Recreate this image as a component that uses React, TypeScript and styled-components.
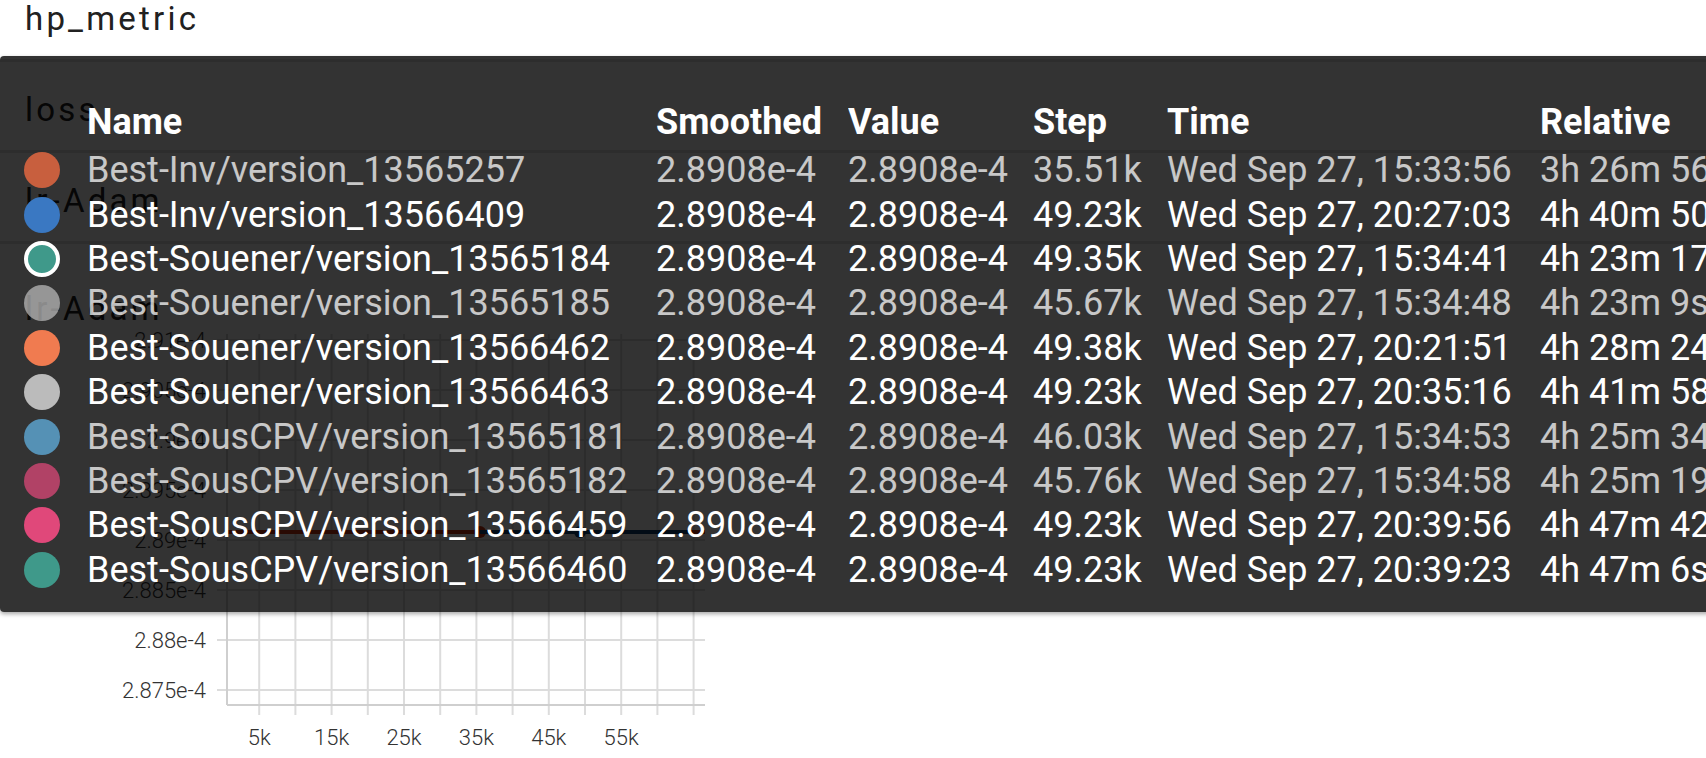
import styled, { createGlobalStyle } from "styled-components";

const GlobalStyle = createGlobalStyle`
  html, body {
    margin: 0;
    padding: 0;
    background: #ffffff;
    overflow: hidden;
  }
  body {
    font-family: Roboto, "Noto Sans", Arial, sans-serif;
  }
`;

interface Run {
  name: string;
  color: string;
  step: string;
  time: string;
  relative: string;
  dim?: boolean;
  selected?: boolean;
}

const runs: Run[] = [
  { name: "Best-Inv/version_13565257", color: "#ff7043", step: "35.51k", time: "Wed Sep 27, 15:33:56", relative: "3h 26m 56s", dim: true },
  { name: "Best-Inv/version_13566409", color: "#3a78c2", step: "49.23k", time: "Wed Sep 27, 20:27:03", relative: "4h 40m 50s" },
  { name: "Best-Souener/version_13565184", color: "#3f998a", step: "49.35k", time: "Wed Sep 27, 15:34:41", relative: "4h 23m 17s", selected: true },
  { name: "Best-Souener/version_13565185", color: "#bbbbbb", step: "45.67k", time: "Wed Sep 27, 15:34:48", relative: "4h 23m 9s", dim: true },
  { name: "Best-Souener/version_13566462", color: "#f07b50", step: "49.38k", time: "Wed Sep 27, 20:21:51", relative: "4h 28m 24s" },
  { name: "Best-Souener/version_13566463", color: "#bbbbbb", step: "49.23k", time: "Wed Sep 27, 20:35:16", relative: "4h 41m 58s" },
  { name: "Best-SousCPV/version_13565181", color: "#62b4e6", step: "46.03k", time: "Wed Sep 27, 15:34:53", relative: "4h 25m 34s", dim: true },
  { name: "Best-SousCPV/version_13565182", color: "#e0487a", step: "45.76k", time: "Wed Sep 27, 15:34:58", relative: "4h 25m 19s", dim: true },
  { name: "Best-SousCPV/version_13566459", color: "#e0487a", step: "49.23k", time: "Wed Sep 27, 20:39:56", relative: "4h 47m 42s" },
  { name: "Best-SousCPV/version_13566460", color: "#3f998a", step: "49.23k", time: "Wed Sep 27, 20:39:23", relative: "4h 47m 6s" },
];

const COLUMNS = "87px 569px 192px 185px 134px 373px 300px";

const Page = styled.div`
  position: relative;
  width: 1706px;
  height: 758px;
  overflow: hidden;
`;

// the run list is scrolled a little: the first header is partly out of view
const Scrolled = styled.div`
  margin-top: -29px;
`;

const GroupHeader = styled.div`
  height: 82px;
  padding-top: 6px;
  display: flex;
  align-items: center;
  padding-left: 25px;
  border-bottom: 3px solid #e0e0e0;
  font-size: 33px;
  letter-spacing: 3.2px;
  color: #212121;
`;

const ChartCard = styled.div`
  display: flex;
  flex-direction: column;
`;

const CardTitle = styled.div`
  padding: 45px 0 0 25px;
  font-size: 33px;
  letter-spacing: 3.2px;
  color: #212121;
`;

const Tooltip = styled.div`
  position: absolute;
  top: 56px;
  left: 0;
  width: 1860px;
  padding: 39px 0 20px;
  background: rgba(0, 0, 0, 0.8);
  border-radius: 4px;
  box-shadow: 0 2px 4px rgba(0, 0, 0, 0.35);
  color: #ffffff;
  font-size: 36px;
  white-space: nowrap;
`;

const HeaderRow = styled.div`
  display: grid;
  grid-template-columns: ${COLUMNS};
  height: 53px;
  align-items: center;
  font-weight: 700;
`;

const Row = styled.div<{ $dim?: boolean }>`
  display: grid;
  grid-template-columns: ${COLUMNS};
  height: 44.4px;
  align-items: center;
  opacity: ${(p) => (p.$dim ? 0.73 : 1)};
`;

const Swatch = styled.span<{ $color: string; $selected?: boolean }>`
  justify-self: start;
  margin-left: 24px;
  width: 36px;
  height: 36px;
  box-sizing: border-box;
  border-radius: 50%;
  background: ${(p) => p.$color};
  border: ${(p) => (p.$selected ? "4px solid #ffffff" : "none")};
`;

const Cell = styled.span`
  overflow: hidden;
`;

const gridYs = [340, 390, 440, 490, 540, 590, 640, 690];
const yLabels = ["2.91e-4", "2.905e-4", "2.9e-4", "2.895e-4", "2.89e-4", "2.885e-4", "2.88e-4", "2.875e-4"];
const stepX = (k: number) => 223 + k * 7.24;
const xLabels = ["5k", "15k", "25k", "35k", "45k", "55k"];

function Chart() {
  const top = 328;
  const vLines = Array.from({ length: 13 }, (_, i) => stepX((i + 1) * 5));
  return (
    <svg width="720" height={758 - top} viewBox={`0 ${top} 720 ${758 - top}`}>
      {gridYs.map((y) => (
        <line key={y} x1={217} x2={705} y1={y} y2={y} stroke="#dcdcdc" strokeWidth={2} />
      ))}
      {vLines.map((x) => (
        <line key={x} x1={x} x2={x} y1={334} y2={715} stroke="#dcdcdc" strokeWidth={2} />
      ))}
      <line x1={227} x2={227} y1={334} y2={705} stroke="#cfcfcf" strokeWidth={2} />
      <line x1={227} x2={705} y1={705} y2={705} stroke="#cfcfcf" strokeWidth={2} />
      {gridYs.map((y, i) => (
        <text
          key={yLabels[i]}
          x={206}
          y={y + 8}
          textAnchor="end"
          fontFamily="Roboto, sans-serif"
          fontSize={22}
          fontWeight={300}
          fill="#333"
        >
          {yLabels[i]}
        </text>
      ))}
      {xLabels.map((l, i) => (
        <text
          key={l}
          x={stepX(5 + i * 10)}
          y={745}
          textAnchor="middle"
          fontFamily="Roboto, sans-serif"
          fontSize={22}
          fontWeight={300}
          fill="#333"
        >
          {l}
        </text>
      ))}
      <line x1={227} x2={480} y1={532} y2={532} stroke="#cc3311" strokeWidth={4} />
      <circle cx={480} cy={532} r={6} fill="#cc3311" />
      <line x1={480} x2={690} y1={532} y2={532} stroke="#0e3d6e" strokeWidth={4} />
      <circle cx={580} cy={532} r={6} fill="#0e3d6e" />
      <line x1={690} x2={705} y1={532} y2={532} stroke="#cc3311" strokeWidth={4} />
    </svg>
  );
}

export default function App() {
  return (
    <Page>
      <GlobalStyle />
      <Scrolled>
        <GroupHeader>hp_metric</GroupHeader>
        <GroupHeader>loss</GroupHeader>
        <GroupHeader>lr-Adam</GroupHeader>
        <ChartCard>
          <CardTitle>lr-Adam</CardTitle>
          <Chart />
        </ChartCard>
      </Scrolled>
      <Tooltip>
        <HeaderRow>
          <span />
          <Cell>Name</Cell>
          <Cell>Smoothed</Cell>
          <Cell>Value</Cell>
          <Cell>Step</Cell>
          <Cell>Time</Cell>
          <Cell>Relative</Cell>
        </HeaderRow>
        {runs.map((r) => (
          <Row key={r.name} $dim={r.dim}>
            <Swatch $color={r.color} $selected={r.selected} />
            <Cell>{r.name}</Cell>
            <Cell>2.8908e-4</Cell>
            <Cell>2.8908e-4</Cell>
            <Cell>{r.step}</Cell>
            <Cell>{r.time}</Cell>
            <Cell>{r.relative}</Cell>
          </Row>
        ))}
      </Tooltip>
    </Page>
  );
}
